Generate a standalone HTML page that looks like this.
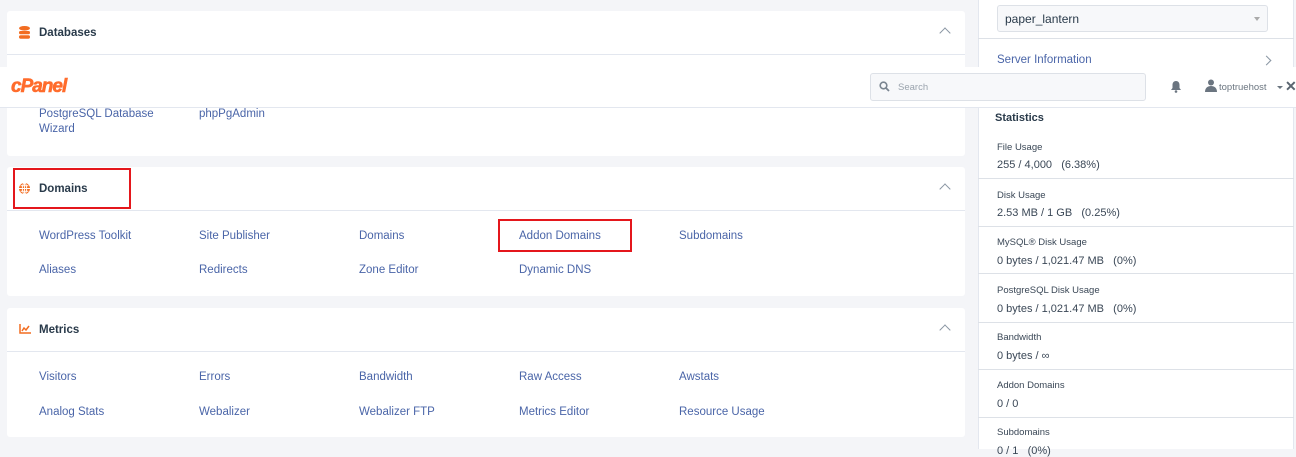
<!DOCTYPE html>
<html><head><meta charset="utf-8"><style>
*{box-sizing:border-box;margin:0;padding:0}
body{width:1296px;height:449px;overflow:hidden;background:#f4f5f8;font-family:"Liberation Sans",sans-serif;position:relative;color:#293a4a}
.a{position:absolute}
.card{position:absolute;left:7px;width:958px;background:#fff;border-radius:3px}
.hd{position:absolute;left:0;right:0;top:0;height:44px;border-bottom:1px solid #e3e7ef}
.t{position:absolute;left:32px;top:16px;font-size:11.5px;font-weight:bold;color:#293a4a}
.car{position:absolute;right:16px;top:18px;width:8px;height:8px;border-left:1.5px solid #8a96a3;border-top:1.5px solid #8a96a3;transform:rotate(45deg)}
.l{position:absolute;font-size:11.5px;color:#4a65a8;margin-top:2px}
.rp{position:absolute;left:978px;top:0;width:316px;height:449px;background:#fff;border-left:1px solid #e3e7ef;border-right:1px solid #e3e7ef}
.sep{position:absolute;left:978px;width:316px;height:1px;background:#dde1e7}
.lab{position:absolute;left:997px;font-size:9.5px;color:#3a4756;margin-top:1px}
.val{position:absolute;left:997px;font-size:11px;color:#3a4756;margin-top:1px}
</style></head><body>
<div class="card" style="top:11px;height:145px"><div class="hd"><svg class="a" style="left:12px;top:15px" width="11" height="13" viewBox="0 0 11 13"><ellipse cx="5.5" cy="2.3" rx="5.5" ry="2.3" fill="#f26d21"/><rect x="0" y="5" width="11" height="3.2" rx="1.6" fill="#f26d21"/><rect x="0" y="9.2" width="11" height="3.5" rx="1.7" fill="#f26d21"/></svg><div class="t">Databases</div><div class="car"></div></div>
<div class="l" style="left:32px;top:95px">PostgreSQL Database</div><div class="l" style="left:32px;top:110px">Wizard</div><div class="l" style="left:192px;top:95px">phpPgAdmin</div></div>
<div class="card" style="top:167px;height:129px"><div class="hd"><svg class="a" style="left:12px;top:16px" width="11" height="11" viewBox="0 0 10 10"><circle cx="5" cy="5" r="5" fill="#f26d21"/><path d="M0 5h10M5 0v10M1.5 2.5h7M1.5 7.5h7" stroke="#fff" stroke-width=".8"/><ellipse cx="5" cy="5" rx="2" ry="5" fill="none" stroke="#fff" stroke-width=".8"/></svg><div class="t">Domains</div><div class="car"></div></div>
<div class="l" style="left:32px;top:61px">WordPress Toolkit</div><div class="l" style="left:192px;top:61px">Site Publisher</div><div class="l" style="left:352px;top:61px">Domains</div><div class="l" style="left:512px;top:61px">Addon Domains</div><div class="l" style="left:672px;top:61px">Subdomains</div>
<div class="l" style="left:32px;top:95px">Aliases</div><div class="l" style="left:192px;top:95px">Redirects</div><div class="l" style="left:352px;top:95px">Zone Editor</div><div class="l" style="left:512px;top:95px">Dynamic DNS</div></div>
<div class="card" style="top:308px;height:129px"><div class="hd"><svg class="a" style="left:12px;top:16px" width="12" height="10" viewBox="0 0 12 10"><path d="M1 0v9h11" stroke="#f26d21" stroke-width="1.5" fill="none"/><path d="M3 7l2-3 2 2 3-4" stroke="#f26d21" stroke-width="1.5" fill="none"/></svg><div class="t">Metrics</div><div class="car"></div></div>
<div class="l" style="left:32px;top:61px">Visitors</div><div class="l" style="left:192px;top:61px">Errors</div><div class="l" style="left:352px;top:61px">Bandwidth</div><div class="l" style="left:512px;top:61px">Raw Access</div><div class="l" style="left:672px;top:61px">Awstats</div>
<div class="l" style="left:32px;top:96px">Analog Stats</div><div class="l" style="left:192px;top:96px">Webalizer</div><div class="l" style="left:352px;top:96px">Webalizer FTP</div><div class="l" style="left:512px;top:96px">Metrics Editor</div><div class="l" style="left:672px;top:96px">Resource Usage</div></div>
<div class="a" style="left:13px;top:168px;width:118px;height:41px;border:2px solid #e4171c"></div>
<div class="a" style="left:498px;top:219px;width:134px;height:33px;border:2px solid #e4171c"></div>
<div class="rp"></div>
<div class="a" style="left:997px;top:5px;width:271px;height:27px;border:1px solid #dde1e7;border-radius:3px;background:#f7f8fa"></div>
<div class="a" style="left:1005px;top:12px;font-size:12px;color:#293a4a">paper_lantern</div>
<div class="a" style="left:1254px;top:17px;border:3px solid transparent;border-top:4px solid #aaa"></div>
<div class="sep" style="top:38px"></div>
<div class="a" style="left:997px;top:54px;font-size:11.5px;color:#4a65a8">Server Information</div>
<div class="a" style="left:1263px;top:57px;width:7px;height:7px;border-right:1.5px solid #8a96a3;border-top:1.5px solid #8a96a3;transform:rotate(45deg)"></div>
<div class="a" style="left:995px;top:112px;font-size:11px;font-weight:bold;color:#293a4a">Statistics</div>
<div class="lab" style="top:141px">File Usage</div><div class="val" style="top:158px">255 / 4,000 &nbsp;&nbsp;(6.38%)</div>
<div class="sep" style="top:178px"></div>
<div class="lab" style="top:189px">Disk Usage</div><div class="val" style="top:206px">2.53 MB / 1 GB &nbsp;&nbsp;(0.25%)</div>
<div class="sep" style="top:226px"></div>
<div class="lab" style="top:236px">MySQL® Disk Usage</div><div class="val" style="top:254px">0 bytes / 1,021.47 MB &nbsp;&nbsp;(0%)</div>
<div class="sep" style="top:273px"></div>
<div class="lab" style="top:284px">PostgreSQL Disk Usage</div><div class="val" style="top:302px">0 bytes / 1,021.47 MB &nbsp;&nbsp;(0%)</div>
<div class="sep" style="top:322px"></div>
<div class="lab" style="top:331px">Bandwidth</div><div class="val" style="top:349px">0 bytes / ∞</div>
<div class="sep" style="top:369px"></div>
<div class="lab" style="top:379px">Addon Domains</div><div class="val" style="top:397px">0 / 0</div>
<div class="sep" style="top:417px"></div>
<div class="lab" style="top:426px">Subdomains</div><div class="val" style="top:444px">0 / 1 &nbsp;&nbsp;(0%)</div>
<div class="a" style="left:0;top:67px;width:1296px;height:41px;background:#fff;border-bottom:1px solid #e3e7ef"></div>
<div class="a" style="left:11px;top:76px;font-size:19px;font-weight:bold;font-style:italic;color:#ff6c2c;letter-spacing:-1px;-webkit-text-stroke:0.6px #ff6c2c">cPanel</div>
<div class="a" style="left:870px;top:73px;width:276px;height:28px;border:1px solid #dde1e7;border-radius:3px;background:#f7f8fa"></div>
<svg class="a" style="left:879px;top:81px" width="11" height="11" viewBox="0 0 11 11"><circle cx="4.5" cy="4.5" r="3.3" fill="none" stroke="#7a8590" stroke-width="1.6"/><path d="M7 7l3 3" stroke="#7a8590" stroke-width="1.8"/></svg>
<div class="a" style="left:898px;top:82px;font-size:9.5px;color:#9aa3ad">Search</div>
<svg class="a" style="left:1170px;top:80px" width="12" height="13" viewBox="0 0 12 13"><path d="M6 1c-2.5 0-3.5 2-3.5 4v3L1 10h10L9.5 8V5C9.5 3 8.5 1 6 1z" fill="#6b7580"/><circle cx="6" cy="11.5" r="1.3" fill="#6b7580"/></svg>
<svg class="a" style="left:1205px;top:79px" width="12" height="13" viewBox="0 0 12 13"><circle cx="6" cy="3.5" r="3" fill="#6b7580"/><path d="M0 13c0-4 2.5-6 6-6s6 2 6 6z" fill="#6b7580"/></svg>
<div class="a" style="left:1219px;top:82px;font-size:9.5px;color:#6b7580">toptruehost</div>
<div class="a" style="left:1277px;top:86px;border:3px solid transparent;border-top:3px solid #6b7580"></div>
<div class="a" style="left:1285px;top:78px;font-size:14px;font-weight:bold;color:#5a6570">✕</div>
</body></html>
